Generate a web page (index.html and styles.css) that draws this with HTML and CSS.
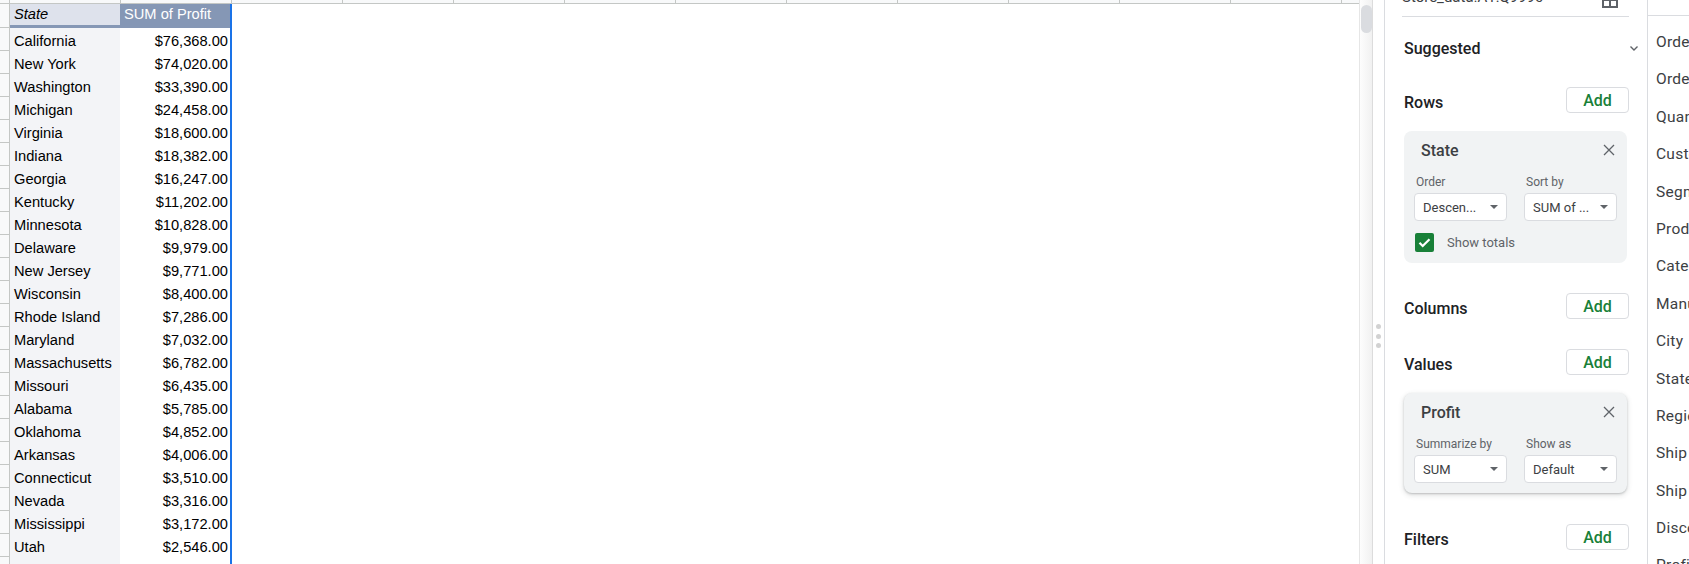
FILE: index.html
```html
<!DOCTYPE html>
<html>
<head>
<meta charset="utf-8">
<link rel="stylesheet" href="styles.css">
</head>
<body>
<div class="app">
  <div class="sheet">
    <div class="colhead">
      <div class="corner"></div>
      <div class="ch"></div><div class="ch"></div><div class="ch"></div><div class="ch"></div>
      <div class="ch"></div><div class="ch"></div><div class="ch"></div><div class="ch"></div>
      <div class="ch"></div><div class="ch"></div><div class="ch"></div><div class="ch"></div>
      <div class="ch"></div>
    </div>
    <div class="grid">
      <div class="row hdr"><div class="rh"></div><div class="c lab">State</div><div class="c val">SUM of Profit</div></div>
      <div class="row"><div class="rh"></div><div class="c lab">California</div><div class="c val">$76,368.00</div></div>
      <div class="row"><div class="rh"></div><div class="c lab">New York</div><div class="c val">$74,020.00</div></div>
      <div class="row"><div class="rh"></div><div class="c lab">Washington</div><div class="c val">$33,390.00</div></div>
      <div class="row"><div class="rh"></div><div class="c lab">Michigan</div><div class="c val">$24,458.00</div></div>
      <div class="row"><div class="rh"></div><div class="c lab">Virginia</div><div class="c val">$18,600.00</div></div>
      <div class="row"><div class="rh"></div><div class="c lab">Indiana</div><div class="c val">$18,382.00</div></div>
      <div class="row"><div class="rh"></div><div class="c lab">Georgia</div><div class="c val">$16,247.00</div></div>
      <div class="row"><div class="rh"></div><div class="c lab">Kentucky</div><div class="c val">$11,202.00</div></div>
      <div class="row"><div class="rh"></div><div class="c lab">Minnesota</div><div class="c val">$10,828.00</div></div>
      <div class="row"><div class="rh"></div><div class="c lab">Delaware</div><div class="c val">$9,979.00</div></div>
      <div class="row"><div class="rh"></div><div class="c lab">New Jersey</div><div class="c val">$9,771.00</div></div>
      <div class="row"><div class="rh"></div><div class="c lab">Wisconsin</div><div class="c val">$8,400.00</div></div>
      <div class="row"><div class="rh"></div><div class="c lab">Rhode Island</div><div class="c val">$7,286.00</div></div>
      <div class="row"><div class="rh"></div><div class="c lab">Maryland</div><div class="c val">$7,032.00</div></div>
      <div class="row"><div class="rh"></div><div class="c lab">Massachusetts</div><div class="c val">$6,782.00</div></div>
      <div class="row"><div class="rh"></div><div class="c lab">Missouri</div><div class="c val">$6,435.00</div></div>
      <div class="row"><div class="rh"></div><div class="c lab">Alabama</div><div class="c val">$5,785.00</div></div>
      <div class="row"><div class="rh"></div><div class="c lab">Oklahoma</div><div class="c val">$4,852.00</div></div>
      <div class="row"><div class="rh"></div><div class="c lab">Arkansas</div><div class="c val">$4,006.00</div></div>
      <div class="row"><div class="rh"></div><div class="c lab">Connecticut</div><div class="c val">$3,510.00</div></div>
      <div class="row"><div class="rh"></div><div class="c lab">Nevada</div><div class="c val">$3,316.00</div></div>
      <div class="row"><div class="rh"></div><div class="c lab">Mississippi</div><div class="c val">$3,172.00</div></div>
      <div class="row"><div class="rh"></div><div class="c lab">Utah</div><div class="c val">$2,546.00</div></div>
      <div class="row"><div class="rh"></div><div class="c lab">Vermont</div><div class="c val">$2,244.00</div></div>
    </div>
  </div>

  <div class="vscroll"><div class="thumb"></div></div>

  <div class="gutter"><span class="dot"></span><span class="dot"></span><span class="dot"></span></div>

  <div class="panel">
    <div class="src">
      <span class="src-text">Store_data!A1:Q9990</span>
      <svg class="src-icon" width="16" height="16" viewBox="0 0 16 16"><rect x="1" y="1" width="14" height="14" fill="none" stroke="#5f6368" stroke-width="2"/><line x1="8" y1="1" x2="8" y2="15" stroke="#5f6368" stroke-width="2"/><line x1="1" y1="8" x2="15" y2="8" stroke="#5f6368" stroke-width="2"/></svg>
    </div>

    <div class="sec sec-sugg">
      <span class="sec-t">Suggested</span>
      <svg width="12" height="12" viewBox="0 0 12 12"><path d="M2.5 4.5l3.5 3.5 3.5-3.5" fill="none" stroke="#5f6368" stroke-width="1.4"/></svg>
    </div>

    <div class="sec sec-rows">
      <span class="sec-t">Rows</span>
      <span class="add">Add</span>
    </div>

    <div class="card card-state">
      <div class="card-h">
        <span>State</span>
        <svg width="12" height="12" viewBox="0 0 12 12"><path d="M1 1l10 10M11 1L1 11" stroke="#5f6368" stroke-width="1.3"/></svg>
      </div>
      <div class="opts">
        <div class="opt"><div class="olab">Order</div><div class="dd"><span>Descen...</span><i class="tri"></i></div></div>
        <div class="opt"><div class="olab">Sort by</div><div class="dd"><span>SUM of ...</span><i class="tri"></i></div></div>
      </div>
      <div class="chk-row">
        <span class="chk"><svg width="19" height="19" viewBox="0 0 19 19"><path d="M4.5 9.8l3.2 3.2 6.8-6.8" fill="none" stroke="#fff" stroke-width="2.2"/></svg></span>
        <span class="chk-lab">Show totals</span>
      </div>
    </div>

    <div class="sec sec-cols">
      <span class="sec-t">Columns</span>
      <span class="add">Add</span>
    </div>

    <div class="sec sec-vals">
      <span class="sec-t">Values</span>
      <span class="add">Add</span>
    </div>

    <div class="card card-profit">
      <div class="card-h">
        <span>Profit</span>
        <svg width="12" height="12" viewBox="0 0 12 12"><path d="M1 1l10 10M11 1L1 11" stroke="#5f6368" stroke-width="1.3"/></svg>
      </div>
      <div class="opts">
        <div class="opt"><div class="olab">Summarize by</div><div class="dd"><span>SUM</span><i class="tri"></i></div></div>
        <div class="opt"><div class="olab">Show as</div><div class="dd"><span>Default</span><i class="tri"></i></div></div>
      </div>
    </div>

    <div class="sec sec-filt">
      <span class="sec-t">Filters</span>
      <span class="add">Add</span>
    </div>
  </div>

  <div class="fields">
    <div class="ftop"></div>
    <ul class="flist">
      <li>Order ID</li>
      <li>Order Date</li>
      <li>Quantity</li>
      <li>Customer</li>
      <li>Segment</li>
      <li>Product</li>
      <li>Category</li>
      <li>Manufacturer</li>
      <li>City</li>
      <li>State</li>
      <li>Region</li>
      <li>Ship Date</li>
      <li>Ship Mode</li>
      <li>Discount</li>
      <li>Profit</li>
    </ul>
  </div>
</div>
</body>
</html>
```

FILE: styles.css
```css
* { box-sizing: border-box; margin: 0; padding: 0; }
html, body { width: 1689px; height: 564px; overflow: hidden; background: #fff; }
body { font-family: "Liberation Sans", Arial, sans-serif; }

.app { display: flex; height: 564px; }

/* ---------- sheet ---------- */
.sheet { width: 1359px; flex: none; overflow: hidden; display: flex; flex-direction: column; }
.colhead { display: flex; height: 4px; flex: none; background: #f8f9fa; border-bottom: 1px solid #c4c7c5; }
.colhead .corner { width: 10px; flex: none; border-right: 1px solid #c4c7c5; }
.colhead .ch { width: 111px; flex: none; border-right: 1px solid #c4c7c5; }

.grid { flex: 1; overflow: hidden; }
.row { display: flex; height: 23px; }
.rh { width: 10px; flex: none; background: #f8f9fa; border-right: 1px solid #c4c7c5; border-bottom: 1px solid #c4c7c5; }
.c { font-size: 14.67px; color: #000; white-space: nowrap; overflow: hidden; line-height: 20px; padding-top: 3px; flex: none; }
.lab { width: 110px; background: #f3f4f7; padding-left: 4px; }
.val { width: 112px; text-align: right; padding-right: 2px; border-right: 2px solid #1a73e8; }

.row.hdr { height: 24px; }
.hdr .lab { background: #dee2ec; font-style: italic; border-bottom: 3px solid #8597b5; padding-top: 0; line-height: 21px; }
.hdr .val { background: #8597b5; color: #fff; text-align: left; padding-left: 4px; padding-top: 0; line-height: 21px; }

/* ---------- scrollbar + gutter ---------- */
.vscroll { width: 14px; flex: none; border-left: 1px solid #e6e6e6; border-right: 1px solid #dcdcdc; background: linear-gradient(90deg, #fdfdfd, #f1f1f1); display: flex; justify-content: center; padding-top: 5px; }
.thumb { width: 11px; height: 28px; border-radius: 6px; background: #dadce0; }

.gutter { width: 11px; flex: none; display: flex; flex-direction: column; align-items: center; padding-top: 324px; gap: 4.5px; }
.dot { width: 5px; height: 5px; border-radius: 50%; background: #d2d2d2; }

/* ---------- pivot editor panel ---------- */
.panel { width: 263px; flex: none; border-left: 1px solid #dadce0; padding: 0 18px 0 17px; font-family: Roboto, "Noto Sans", sans-serif; color: #202124; display: flex; flex-direction: column; }
.src { height: 17px; flex: none; border-bottom: 1px solid #dadce0; display: flex; align-items: flex-end; justify-content: space-between; overflow: hidden; padding-bottom: 10px; }
.src-text { font-size: 15px; line-height: 18px; color: #3c4043; }
.src-icon { margin-right: 11px; margin-bottom: -2px; flex: none; }

.sec { display: flex; align-items: center; justify-content: space-between; height: 26px; flex: none; font-size: 16px; font-weight: 500; color: #202124; }
.sec-t { padding-left: 2px; }
.sec-rows .sec-t, .sec-cols .sec-t, .sec-vals .sec-t, .sec-filt .sec-t { padding-top: 4px; }
.sec-sugg { margin-top: 18px; margin-right: -11px; }
.sec-rows { margin-top: 26px; }
.sec-cols { margin-top: 30px; }
.sec-vals { margin-top: 30px; }
.sec-filt { margin-top: 31px; }

.add { width: 63px; height: 26px; border: 1px solid #dadce0; border-radius: 4px; color: #188038; font-size: 16px; font-weight: 500; display: flex; align-items: center; justify-content: center; background: #fff; }

.card { background: #f1f3f4; border-radius: 8px; padding: 0 10px 11px; margin: 18px 2px 0; flex: none; }
.card-profit { padding-bottom: 10px; margin-top: 18px; box-shadow: 0 1px 2px rgba(60, 64, 67, .25), 0 2px 5px 1px rgba(60, 64, 67, .12); }
.card-h { height: 38px; display: flex; align-items: center; justify-content: space-between; padding: 0 2px 0 7px; font-size: 16px; font-weight: 500; color: #3c4043; }

.opts { display: grid; grid-template-columns: 93px 93px; column-gap: 17px; }
.olab { font-size: 12px; line-height: 16px; color: #5f6368; margin-top: 5px; padding-left: 2px; white-space: nowrap; }
.dd { margin-top: 3px; height: 28px; background: #fff; border: 1px solid #dadce0; border-radius: 4px; display: flex; align-items: center; justify-content: space-between; padding: 0 8px; font-size: 13px; color: #3c4043; white-space: nowrap; }
.tri { width: 0; height: 0; border-left: 4px solid transparent; border-right: 4px solid transparent; border-top: 4px solid #5f6368; }

.chk-row { margin-top: 11px; height: 20px; display: flex; align-items: center; }
.chk { width: 19px; height: 19px; margin-left: 1px; border-radius: 2px; background: #188038; display: flex; }
.chk-lab { margin-left: 13px; font-size: 13px; color: #5f6368; }

/* ---------- field list ---------- */
.fields { flex: 1; border-left: 1px solid #dadce0; font-family: Roboto, "Noto Sans", sans-serif; overflow: hidden; }
.ftop { height: 16px; border-bottom: 1px solid #dadce0; }
.flist { list-style: none; padding: 8px 0 0 8px; }
.flist li { height: 37.4px; line-height: 37.4px; font-size: 15.5px; letter-spacing: 0.25px; color: #3c4043; white-space: nowrap; }
```
